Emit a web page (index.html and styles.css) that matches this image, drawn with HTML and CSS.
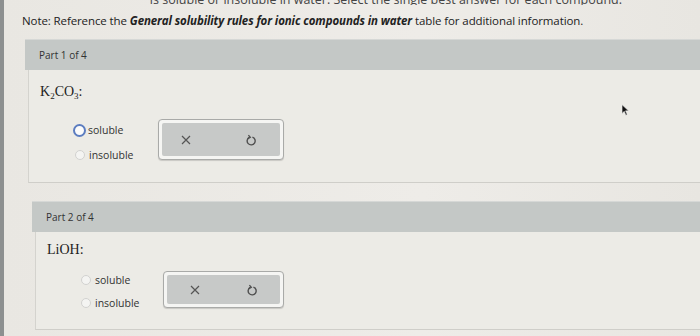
FILE: index.html
```html
<!DOCTYPE html>
<html>
<head>
<meta charset="utf-8">
<link rel="stylesheet" href="styles.css">
</head>
<body>
<div class="screen">
  <div class="cut-line"><span>is soluble or insoluble in water. Select the single best answer for each compound.</span></div>
  <p class="note">Note: Reference the <b><i>General solubility rules for ionic compounds in water</i></b> table for additional information.</p>

  <section class="card card-one">
    <div class="card-head">Part 1 of 4</div>
    <div class="card-body">
      <div class="formula">K<sub>2</sub>CO<sub>3</sub>:</div>
      <div class="answer-row">
        <div class="options">
          <div class="option"><span class="radio radio-active"></span><span>soluble</span></div>
          <div class="option"><span class="radio"></span><span>insoluble</span></div>
        </div>
        <div class="tools">
          <div class="tools-inner">
            <svg class="icon-x" viewBox="0 0 10 10" width="10" height="10"><path d="M1 1L9 9M9 1L1 9" stroke="#555" stroke-width="1.2" fill="none"/></svg>
            <svg class="icon-undo" viewBox="0 0 12 12" width="12" height="12"><path d="M4.2 3.4A4 4 0 1 0 7.4 3.1" stroke="#4f4f4f" stroke-width="1.4" fill="none"/><path d="M3.4 1.2L5.3 3.4L2.8 4.6" stroke="#4f4f4f" stroke-width="1.3" fill="none"/></svg>
          </div>
        </div>
      </div>
    </div>
  </section>

  <section class="card card-two">
    <div class="card-head">Part 2 of 4</div>
    <div class="card-body">
      <div class="formula">LiOH:</div>
      <div class="answer-row">
        <div class="options">
          <div class="option"><span class="radio"></span><span>soluble</span></div>
          <div class="option"><span class="radio"></span><span>insoluble</span></div>
        </div>
        <div class="tools">
          <div class="tools-inner">
            <svg class="icon-x" viewBox="0 0 10 10" width="10" height="10"><path d="M1 1L9 9M9 1L1 9" stroke="#555" stroke-width="1.2" fill="none"/></svg>
            <svg class="icon-undo" viewBox="0 0 12 12" width="12" height="12"><path d="M4.2 3.4A4 4 0 1 0 7.4 3.1" stroke="#4f4f4f" stroke-width="1.4" fill="none"/><path d="M3.4 1.2L5.3 3.4L2.8 4.6" stroke="#4f4f4f" stroke-width="1.3" fill="none"/></svg>
          </div>
        </div>
      </div>
    </div>
  </section>

  <svg class="cursor" viewBox="0 0 10 14" width="9" height="12"><path d="M1 1L1 11L3.5 8.5L5.5 13L7 12.3L5 8L8.5 8Z" fill="#111" stroke="#eee" stroke-width="0.6"/></svg>
</div>
</body>
</html>
```

FILE: styles.css
```css
* { box-sizing: border-box; }
html, body { margin: 0; padding: 0; }
body {
  width: 700px;
  height: 336px;
  overflow: hidden;
  background: #ebe9e4;
  font-family: "Open Sans", "Liberation Sans", sans-serif;
  color: #2e2e2e;
}
.screen {
  position: relative;
  height: 336px;
  border-left: 4px solid #8d9090;
  background: linear-gradient(90deg, #e9e7e2 0%, #eeece8 60%, #e8e6e1 100%);
}
.cut-line {
  height: 5px;
  overflow: hidden;
  display: flex;
  justify-content: flex-end;
  align-items: flex-end;
  padding-right: 78px;
  font-size: 12.5px;
  color: #444;
  white-space: nowrap;
}
.cut-line span {
  display: block;
  line-height: 12px;
  margin-bottom: -1px;
}
.note {
  margin: 8px 0 0 18px;
  font-size: 11.5px;
  line-height: 15px;
  letter-spacing: -0.1px;
  color: #222;
}
.note b { font-weight: 700; }

.card {
  margin-right: -20px;
}
.card-one {
  margin-top: 11px;
  margin-left: 21px;
}
.card-two {
  margin-top: 18px;
  margin-left: 28px;
}
.card-head {
  height: 31px;
  background: #c4c8c6;
  border-top: 1px solid #d6d8d6;
  font-size: 10px;
  padding-left: 14px;
  display: flex;
  align-items: center;
  color: #333;
}
.card-body {
  background: #ecebe6;
  border-left: 1px solid #d4d3ce;
  border-bottom: 1px solid #cfcec9;
  margin-left: 3px;
}
.card-one .card-body {
  height: 113px;
  padding: 13px 0 0 11px;
}
.card-two .card-body {
  height: 98px;
  padding: 9px 0 0 11px;
}
.formula {
  font-family: "Liberation Serif", "DejaVu Serif", serif;
  font-size: 14px;
  line-height: 18px;
  color: #222;
}
.formula sub {
  font-size: 9px;
  vertical-align: -3px;
  line-height: 0;
}
.answer-row {
  display: flex;
  align-items: flex-start;
}
.card-one .answer-row { margin-top: 18px; }
.card-two .answer-row { margin-top: 12px; }
.options {
  display: flex;
  flex-direction: column;
  gap: 7px;
  padding-top: 2px;
  width: 118px;
}
.card-one .options { padding-left: 32px; }
.card-two .options { padding-left: 31px; width: 116px; padding-top: 0; gap: 5px; }
.option {
  display: flex;
  align-items: center;
  height: 18px;
  font-size: 10.5px;
  color: #333;
}
.option .radio {
  width: 10px;
  height: 10px;
  border-radius: 50%;
  border: 1px solid #d2d2d0;
  background: #f4f4f2;
  margin: 0 4px 0 3px;
  flex: none;
}
.option .radio-active {
  width: 13px;
  height: 13px;
  border: 2.5px solid #5c7dc0;
  background: #fbfbfb;
  margin: 0 2px 0 1px;
}
.tools {
  border: 1px solid #a9aaa8;
  border-radius: 4px;
  background: #f5f5f3;
  padding: 3px;
  box-shadow: 0 1px 1px rgba(0,0,0,0.15);
}
.card-one .tools { width: 126px; height: 41px; }
.card-two .tools { width: 121px; height: 37px; }
.tools-inner {
  height: 100%;
  background: #c7c9c8;
  border-radius: 2px;
  display: flex;
  align-items: center;
  justify-content: space-between;
  padding: 0 23px 0 19px;
}
.card-two .tools-inner { padding: 0 22px 0 23px; }
.icon-x { display: block; }
.icon-undo { display: block; }
.cursor {
  position: absolute;
  left: 617px;
  top: 104px;
}
```
